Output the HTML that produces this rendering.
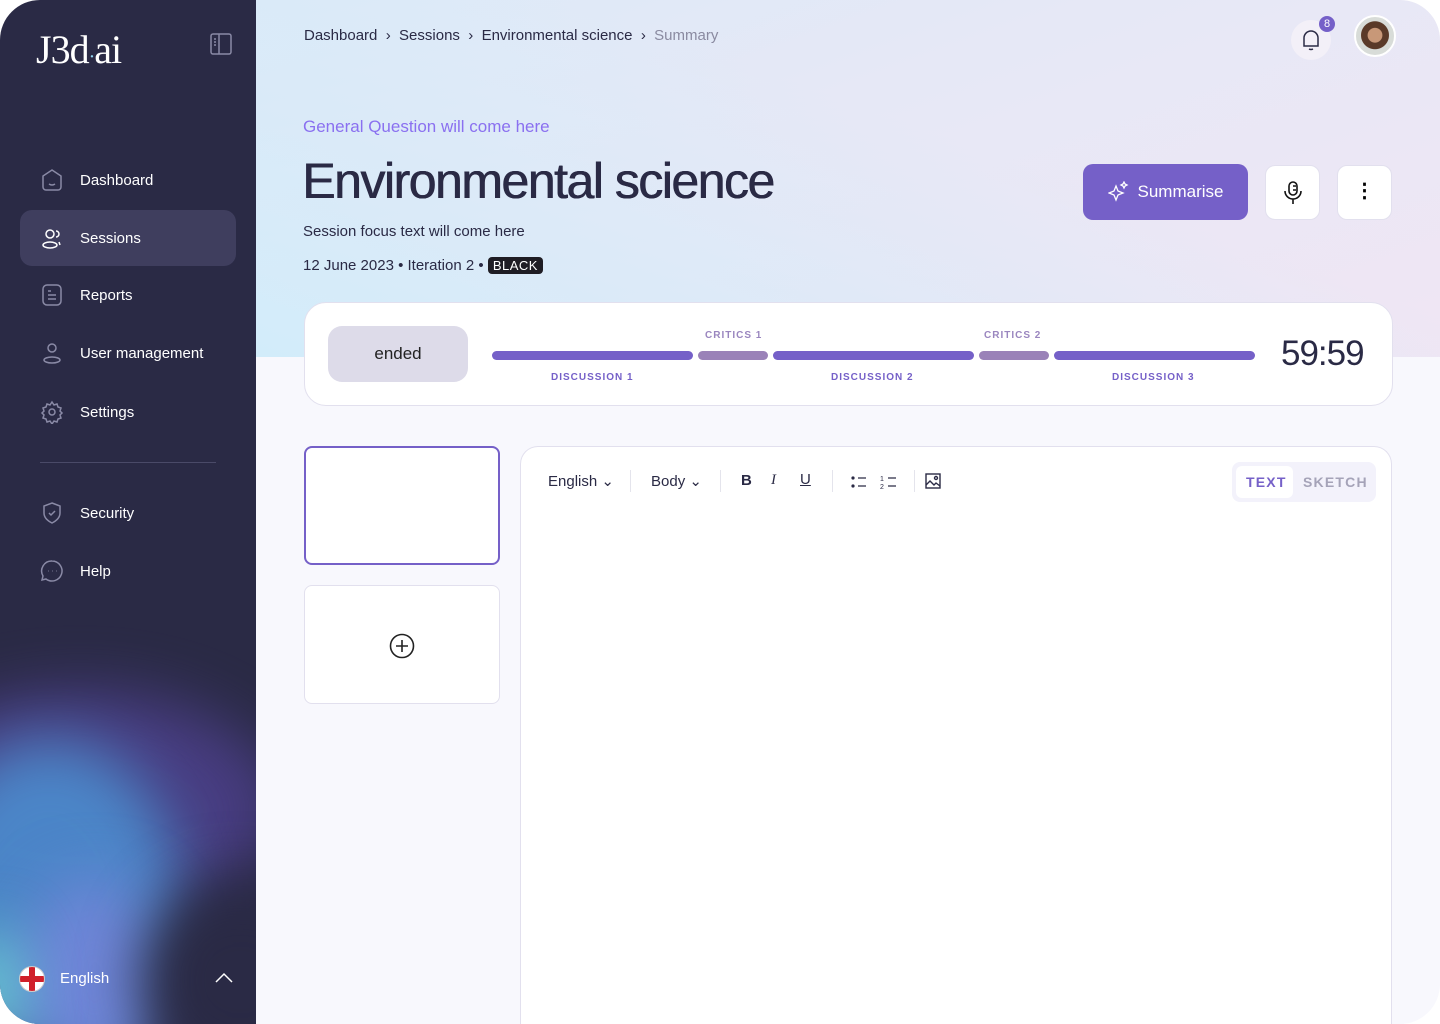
<!DOCTYPE html>
<html><head><meta charset="utf-8"><style>
*{box-sizing:border-box;margin:0;padding:0}
html,body{width:1440px;height:1024px;overflow:hidden}
body{background:#fff;font-family:"Liberation Sans",sans-serif;position:relative}
.app{position:absolute;inset:0;border-radius:40px;overflow:hidden;background:#f8f8fd}
.side{position:absolute;left:0;top:0;width:256px;height:1024px;background:#2a2a45;overflow:hidden}
.blob{position:absolute;border-radius:50%;filter:blur(30px)}
.main{position:absolute;left:256px;top:0;right:0;bottom:0;overflow:hidden}
.hero{position:absolute;left:0;top:0;right:0;height:357px;background:linear-gradient(160deg,#dceaf8 0%,#e6e8f6 40%,#f0e6f4 100%)}
.hero:before{content:"";position:absolute;inset:0;background:linear-gradient(200deg,rgba(255,255,255,0) 40%,#d2ecfa 100%)}
.nav{position:absolute;left:20px;width:216px;height:56px;display:flex;align-items:center;color:#fff;font-size:15px}
.nav svg{position:absolute;left:20px}
.nav span{position:absolute;left:60px}
.bc{position:absolute;left:48px;top:27px;font-size:15px;color:#2a2a45}
.card{position:absolute;background:#fff;border:1px solid #e2e0ee}
.seg{position:absolute;top:351px;height:9px;border-radius:5px;background:#7560c8}
.lbl{position:absolute;font-size:10px;font-weight:bold;letter-spacing:1px;color:#7560c8}
.lblc{color:#9a86bf}
</style></head><body><div class="app">
<div class="side">
 <div class="blob" style="left:-120px;top:690px;width:400px;height:240px;background:#4b3f88;opacity:.9"></div>
 <div class="blob" style="left:-80px;top:740px;width:260px;height:320px;background:#4c8ed0;opacity:.9"></div>
 <div class="blob" style="left:20px;top:880px;width:150px;height:200px;background:#6f86d8"></div>
 <div class="blob" style="left:-40px;top:930px;width:60px;height:120px;background:#6fd2d6"></div>
 <div class="blob" style="left:140px;top:880px;width:200px;height:200px;background:#2a2a45"></div>
 <div style="position:absolute;left:36px;top:26px;font-family:'Liberation Serif',serif;font-size:40px;color:#fff;letter-spacing:-1px">J3d<span style="color:#8fd4f0;font-size:20px">·</span>ai</div>
 <svg style="position:absolute;left:210px;top:33px" width="22" height="22" fill="none" stroke="#8a8aa6" stroke-width="1.5"><rect x="1" y="1" width="20" height="20" rx="2"/><path d="M9 1v20M4 6h2M4 9h2M4 12h2"/></svg>
 <div class="nav" style="top:152px"><svg width="24" height="24" fill="none" stroke="#8a8aa6" stroke-width="1.5"><path d="M12 2l9 6v11a3 3 0 01-3 3H6a3 3 0 01-3-3V8z M9 16q3 2 6 0"/></svg><span>Dashboard</span></div>
 <div class="nav" style="top:210px;background:#3f3e5e;border-radius:12px"><svg width="24" height="24" fill="none" stroke="#fff" stroke-width="1.5"><circle cx="10" cy="8" r="4"/><ellipse cx="10" cy="19" rx="7" ry="3"/><path d="M16 5a3 3 0 010 6M19 16l1 3"/></svg><span>Sessions</span></div>
 <div class="nav" style="top:267px"><svg width="24" height="24" fill="none" stroke="#8a8aa6" stroke-width="1.5"><rect x="3" y="2" width="18" height="20" rx="4"/><path d="M8 8h3M8 12h8M8 16h8"/></svg><span>Reports</span></div>
 <div class="nav" style="top:325px"><svg width="24" height="24" fill="none" stroke="#8a8aa6" stroke-width="1.5"><circle cx="12" cy="7" r="4"/><ellipse cx="12" cy="19" rx="8" ry="3"/></svg><span>User management</span></div>
 <div class="nav" style="top:384px"><svg width="24" height="24" fill="none" stroke="#8a8aa6" stroke-width="1.5"><circle cx="12" cy="12" r="3"/><path d="M12 2l2 3 3-1 1 3 3 1-1 3 2 2-2 2 1 3-3 1-1 3-3-1-2 3-2-3-3 1-1-3-3-1 1-3-2-2 2-2-1-3 3-1 1-3 3 1z"/></svg><span>Settings</span></div>
 <div style="position:absolute;left:40px;top:462px;width:176px;height:1px;background:#4a4a68"></div>
 <div class="nav" style="top:485px"><svg width="24" height="24" fill="none" stroke="#8a8aa6" stroke-width="1.5"><path d="M12 2l8 3v7c0 5-4 8-8 10-4-2-8-5-8-10V5z M9 12l2 2 4-4"/></svg><span>Security</span></div>
 <div class="nav" style="top:543px"><svg width="24" height="24" fill="none" stroke="#8a8aa6" stroke-width="1.5"><path d="M12 2a10 10 0 11-6 18l-4 1 1-4A10 10 0 0112 2z"/><path d="M8 12h.5M12 12h.5M16 12h.5"/></svg><span>Help</span></div>
 <div style="position:absolute;left:19px;top:966px;width:26px;height:26px;border-radius:50%;background:#fff;overflow:hidden;border:1px solid #ccc"><div style="position:absolute;left:9px;top:0;width:6px;height:26px;background:#d0202a"></div><div style="position:absolute;top:9px;left:0;height:6px;width:26px;background:#d0202a"></div></div>
 <div style="position:absolute;left:60px;top:970px;color:#fff;font-size:15px">English</div>
 <svg style="position:absolute;left:215px;top:972px" width="18" height="12" fill="none" stroke="#fff" stroke-width="1.5"><path d="M1 10l8-8 8 8"/></svg>
</div>
<div class="main">
 <div class="hero"></div>
 <div class="bc">Dashboard &nbsp;›&nbsp; Sessions &nbsp;›&nbsp; Environmental science &nbsp;›&nbsp; <span style="color:#8a8aa0">Summary</span></div>
 <div style="position:absolute;left:1035px;top:20px;width:40px;height:40px;border-radius:50%;background:#f3f0f8"></div>
 <svg style="position:absolute;left:1044px;top:28px" width="22" height="24" fill="none" stroke="#2a2a45" stroke-width="1.5"><path d="M4 18V10a7 7 0 0114 0v8z M9 21q2 1 4 0"/></svg>
 <div style="position:absolute;left:1063px;top:16px;width:16px;height:16px;border-radius:50%;background:#7560c8;color:#fff;font-size:11px;text-align:center;line-height:16px">8</div>
 <div style="position:absolute;left:1098px;top:15px;width:42px;height:42px;border-radius:50%;background:radial-gradient(circle at 50% 48%,#c89878 0 26%,#5a3a28 28% 50%,#d8dcd8 52%);border:2px solid #fff"></div>
 <div style="position:absolute;left:47px;top:117px;font-size:17px;color:#8a70f0">General Question will come here</div>
 <div style="position:absolute;left:46px;top:152px;font-size:50px;color:#2a2a45;letter-spacing:-1.5px;text-shadow:0.7px 0 #2a2a45,0.3px 0 #2a2a45">Environmental science</div>
 <div style="position:absolute;left:47px;top:223px;font-size:15px;color:#2a2a45">Session focus text will come here</div>
 <div style="position:absolute;left:47px;top:257px;font-size:15px;color:#2a2a45">12 June 2023 • Iteration 2 • <span style="background:#1f1d24;color:#fff;border-radius:4px;padding:1px 5px;font-size:13px;letter-spacing:.5px">BLACK</span></div>
 <div style="position:absolute;left:827px;top:164px;width:165px;height:56px;border-radius:10px;background:#7560c8;color:#fff;font-size:17px;display:flex;align-items:center;justify-content:center;gap:8px"><svg width="22" height="22" fill="none" stroke="#fff" stroke-width="1.3"><path d="M8 5l2 5 5 2-5 2-2 5-2-5-5-2 5-2z M16 1l1 2 2 1-2 1-1 2-1-2-2-1 2-1z"/></svg>Summarise</div>
 <div class="card" style="left:1009px;top:165px;width:55px;height:55px;border-radius:10px"><svg style="position:absolute;left:16px;top:15px" width="22" height="24" fill="none" stroke="#111" stroke-width="1.6"><rect x="7" y="1" width="8" height="13" rx="4"/><path d="M3 10a8 8 0 0016 0M11 18v5M11 5h3M11 9h3"/></svg></div>
 <div class="card" style="left:1081px;top:165px;width:55px;height:55px;border-radius:10px;font-size:20px;text-align:center;line-height:50px;font-weight:bold">⋮</div>
 <div class="card" style="left:48px;top:302px;width:1089px;height:104px;border-radius:22px"></div>
 <div style="position:absolute;left:72px;top:326px;width:140px;height:56px;border-radius:14px;background:#dddbe9;font-size:17px;color:#222;text-align:center;line-height:56px">ended</div>
 <div class="seg" style="left:236px;width:201px"></div>
 <div class="seg" style="left:442px;width:70px;background:#9a82b8"></div>
 <div class="seg" style="left:517px;width:201px"></div>
 <div class="seg" style="left:723px;width:70px;background:#9a82b8"></div>
 <div class="seg" style="left:798px;width:201px"></div>
 <div class="lbl lblc" style="left:449px;top:330px">CRITICS 1</div>
 <div class="lbl lblc" style="left:728px;top:330px">CRITICS 2</div>
 <div class="lbl" style="left:295px;top:372px">DISCUSSION 1</div>
 <div class="lbl" style="left:575px;top:372px">DISCUSSION 2</div>
 <div class="lbl" style="left:856px;top:372px">DISCUSSION 3</div>
 <div style="position:absolute;left:1025px;top:334px;font-size:35px;color:#2a2a45;letter-spacing:-1px">59:59</div>
 <div class="card" style="left:48px;top:446px;width:196px;height:119px;border-radius:8px;border:2px solid #7560c8"></div>
 <div class="card" style="left:48px;top:585px;width:196px;height:119px;border-radius:8px"><svg style="position:absolute;left:84px;top:47px" width="26" height="26" fill="none" stroke="#222" stroke-width="1.6"><circle cx="13" cy="13" r="11.5"/><path d="M13 7v12M7 13h12"/></svg></div>
 <div class="card" style="left:264px;top:446px;width:872px;height:578px;border-radius:18px 18px 0 0;border-bottom:none"></div>
 <div style="position:absolute;left:292px;top:472px;font-size:15px;color:#2a2a45">English ⌄</div>
 <div style="position:absolute;left:374px;top:470px;width:1px;height:22px;background:#e4e4ec"></div>
 <div style="position:absolute;left:395px;top:472px;font-size:15px;color:#2a2a45">Body ⌄</div>
 <div style="position:absolute;left:464px;top:470px;width:1px;height:22px;background:#e4e4ec"></div>
 <div style="position:absolute;left:485px;top:472px;font-size:15px;font-weight:bold;color:#2a2a45">B</div>
 <div style="position:absolute;left:515px;top:472px;font-size:15px;font-style:italic;color:#2a2a45;font-family:'Liberation Serif',serif">I</div>
 <div style="position:absolute;left:544px;top:471px;font-size:15px;text-decoration:underline;color:#2a2a45">U</div>
 <div style="position:absolute;left:576px;top:470px;width:1px;height:22px;background:#e4e4ec"></div>
 <svg style="position:absolute;left:594px;top:474px" width="50" height="16" fill="#2a2a45" stroke="#2a2a45"><circle cx="3" cy="4" r="1.6" stroke="none"/><circle cx="3" cy="12" r="1.6" stroke="none"/><path d="M8 4h8M8 12h8M38 4h8M38 12h8" fill="none" stroke-width="1.3"/><text x="30" y="7" font-size="7" stroke="none" font-family="Liberation Sans">1</text><text x="30" y="15" font-size="7" stroke="none" font-family="Liberation Sans">2</text></svg>
 <div style="position:absolute;left:658px;top:470px;width:1px;height:22px;background:#e4e4ec"></div>
 <svg style="position:absolute;left:669px;top:473px" width="16" height="16" fill="none" stroke="#2a2a45" stroke-width="1.4"><rect x="1" y="1" width="14" height="14"/><path d="M1 12l4-4 4 4 2-2 4 3"/><circle cx="11" cy="5" r="1.5"/></svg>
 <div style="position:absolute;left:976px;top:462px;width:144px;height:40px;border-radius:8px;background:#f3f2fb"></div>
 <div style="position:absolute;left:980px;top:466px;width:57px;height:32px;border-radius:6px;background:#fff"></div>
 <div style="position:absolute;left:990px;top:474px;font-size:14px;font-weight:bold;letter-spacing:1.2px;color:#7560c8">TEXT</div>
 <div style="position:absolute;left:1047px;top:474px;font-size:14px;font-weight:bold;letter-spacing:1.2px;color:#a5a3b8">SKETCH</div>
</div>
</div></body></html>
